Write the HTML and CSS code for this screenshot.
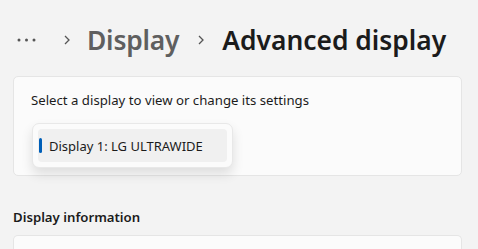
FILE: index.html
```html
<!DOCTYPE html>
<html lang="en">

<head>
    <meta charset="UTF-8">
    <meta name="viewport" content="width=device-width, initial-scale=1.0">
    <title>Advanced display</title>
    <link rel="stylesheet" href="styles.css">
</head>

<body>
    <header class="breadcrumb">
        <svg class="dots" width="22" height="6" viewBox="0 0 22 6">
            <circle cx="2" cy="3" r="1.5" />
            <circle cx="9.5" cy="3" r="1.5" />
            <circle cx="17" cy="3" r="1.5" />
        </svg>
        <svg class="chevron" width="8" height="10" viewBox="0 0 8 10">
            <path d="M2 1l4 4-4 4" />
        </svg>
        <span class="crumb">Display</span>
        <svg class="chevron" width="8" height="10" viewBox="0 0 8 10">
            <path d="M2 1l4 4-4 4" />
        </svg>
        <h1 class="crumb current">Advanced display</h1>
    </header>

    <section class="card">
        <p class="card-label">Select a display to view or change its settings</p>
        <div class="flyout">
            <div class="flyout-item">
                <span class="indicator"></span>
                <span>Display 1: LG ULTRAWIDE</span>
            </div>
        </div>
    </section>

    <h2 class="section-title">Display information</h2>
    <section class="card card-info"></section>
</body>

</html>
```

FILE: styles.css
```css
* {
    box-sizing: border-box;
    margin: 0;
    padding: 0;
}

body {
    font-family: 'Segoe UI', 'Noto Sans', sans-serif;
    background-color: #f3f3f3;
    color: #1b1b1b;
    height: 249px;
    overflow: hidden;
}

.breadcrumb {
    display: flex;
    align-items: center;
    height: 40px;
    margin-top: 20px;
    padding-left: 17px;
}

.dots {
    fill: #555;
    margin-right: 24px;
}

.chevron {
    fill: none;
    stroke: #555;
    stroke-width: 1.3;
    margin-right: 16px;
}

.crumb {
    font-size: 26.4px;
    font-weight: 600;
    color: #5f5f5f;
    margin-right: 18px;
    letter-spacing: -0.2px;
}

.crumb.current {
    color: #1b1b1b;
    margin-right: 0;
    margin-left: 1px;
    letter-spacing: 0;
}

.card {
    margin: 16px 16px 0 13px;
    background-color: #fbfbfb;
    border: 1px solid #e5e5e5;
    border-radius: 5px;
    padding: 14px 17px 7px;
    height: 100px;
}

.card-label {
    font-size: 13.2px;
    color: #1b1b1b;
}

.flyout {
    margin-top: 14px;
    margin-left: 1px;
    width: 201px;
    padding: 5px 5px;
    background-color: #fbfbfb;
    border: 1px solid #e8e8e8;
    border-radius: 7px;
    box-shadow: 0 6px 12px rgba(0, 0, 0, 0.12);
}

.flyout-item {
    display: flex;
    align-items: center;
    height: 33px;
    background-color: #f0f0f0;
    border-radius: 4px;
    font-size: 13px;
    color: #1b1b1b;
}

.indicator {
    width: 3px;
    height: 15px;
    border-radius: 2px;
    background-color: #005fb8;
    margin-left: 1px;
    margin-right: 7px;
}

.section-title {
    font-size: 13.2px;
    font-weight: 600;
    margin: 32px 0 0 13px;
    color: #1b1b1b;
}

.card-info {
    margin-top: 9px;
    height: 12px;
    border-bottom: none;
    border-radius: 5px 5px 0 0;
}
```
